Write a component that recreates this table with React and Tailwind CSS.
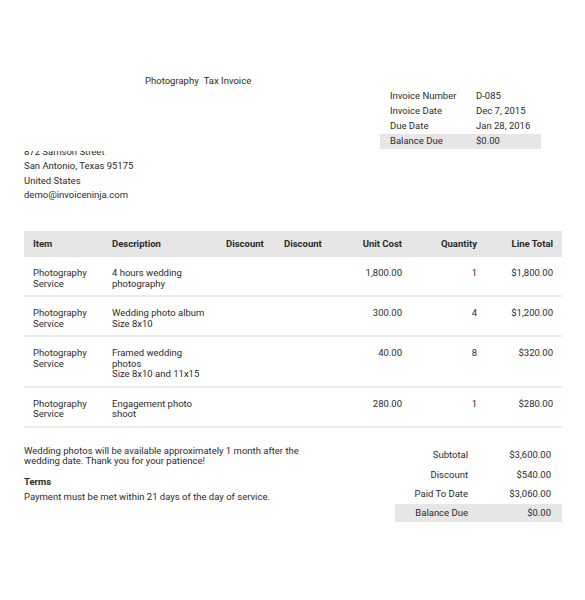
import React from 'react';

const details = [
    ['Invoice Number', 'D-085'],
    ['Invoice Date', 'Dec 7, 2015'],
    ['Due Date', 'Jan 28, 2016'],
];

const items = [
    { item: ['Photography', 'Service'], desc: ['4 hours wedding', 'photography'], cost: '1,800.00', qty: '1', total: '$1,800.00' },
    { item: ['Photography', 'Service'], desc: ['Wedding photo album', 'Size 8x10'], cost: '300.00', qty: '4', total: '$1,200.00' },
    { item: ['Photography', 'Service'], desc: ['Framed wedding', 'photos', 'Size 8x10 and 11x15'], cost: '40.00', qty: '8', total: '$320.00' },
    { item: ['Photography', 'Service'], desc: ['Engagement photo', 'shoot'], cost: '280.00', qty: '1', total: '$280.00' },
];

const totals = [
    ['Subtotal', '$3,600.00'],
    ['Discount', '$540.00'],
    ['Paid To Date', '$3,060.00'],
];

const cols = 'grid grid-cols-[79px_114px_58px_58px_78px_75px_76px]';

const App = () => {
    return (
        <div className="w-[585px] h-[600px] bg-white font-['Roboto',sans-serif] text-[9.5px] text-[#2b2b2b] pl-[24px] pr-[23px] pt-[75px]">
            {/* header */}
            <div className="flex items-start">
                <div className="ml-[121px] leading-[11px] flex gap-[5px]">
                    <span>Photography</span>
                    <span>Tax Invoice</span>
                </div>
                <div className="ml-auto mr-[21px] mt-[14px] w-[161px]">
                    {details.map(([k, v]) => (
                        <div key={k} className="h-[15px] flex items-center pl-[10px]">
                            <span className="w-[86px]">{k}</span>
                            <span>{v}</span>
                        </div>
                    ))}
                    <div className="h-[15px] flex items-center pl-[10px] bg-[#e6e6e6]">
                        <span className="w-[86px]">Balance Due</span>
                        <span>$0.00</span>
                    </div>
                </div>
            </div>

            {/* address, top line clipped as in the print preview */}
            <div className="mt-[2px] overflow-hidden">
                <div className="-mt-[6px] leading-[14.3px]">
                    <div>872 Samson Street</div>
                    <div>San Antonio, Texas 95175</div>
                    <div>United States</div>
                    <div>demo@invoiceninja.com</div>
                </div>
            </div>

            {/* items */}
            <div className="mt-[29px]">
                <div className={`${cols} h-[26px] items-center bg-[#e6e6e6] font-bold`}>
                    <div className="pl-[9px]">Item</div>
                    <div className="pl-[9px]">Description</div>
                    <div className="pl-[9px]">Discount</div>
                    <div className="pl-[9px]">Discount</div>
                    <div className="text-right pr-[9px]">Unit Cost</div>
                    <div className="text-right pr-[9px]">Quantity</div>
                    <div className="text-right pr-[9px]">Line Total</div>
                </div>
                {items.map((r, i) => (
                    <div key={i} className={`${cols} pt-[11px] pb-[6px] leading-[10.5px] border-b-2 border-[#ececec]`}>
                        <div className="pl-[9px]">{r.item.map(t => <div key={t}>{t}</div>)}</div>
                        <div className="pl-[9px]">{r.desc.map(t => <div key={t}>{t}</div>)}</div>
                        <div></div>
                        <div></div>
                        <div className="text-right pr-[9px]">{r.cost}</div>
                        <div className="text-right pr-[9px]">{r.qty}</div>
                        <div className="text-right pr-[9px]">{r.total}</div>
                    </div>
                ))}
            </div>

            {/* footer */}
            <div className="flex items-start mt-[17px]">
                <div className="w-[290px] leading-[10.5px] pt-[1px]">
                    <p>Wedding photos will be available approximately 1 month after the wedding date. Thank you for your patience!</p>
                    <p className="font-bold mt-[10px]">Terms</p>
                    <p className="mt-[5px]">Payment must be met within 21 days of the day of service.</p>
                </div>
                <div className="ml-auto w-[167px] pt-[1px]">
                    {totals.map(([k, v]) => (
                        <div key={k} className="h-[19.5px] flex items-center">
                            <span className="w-[73px] text-right">{k}</span>
                            <span className="w-[83px] text-right">{v}</span>
                        </div>
                    ))}
                    <div className="h-[18px] flex items-center bg-[#e6e6e6]">
                        <span className="w-[73px] text-right">Balance Due</span>
                        <span className="w-[83px] text-right">$0.00</span>
                    </div>
                </div>
            </div>
        </div>
    );
};

export default App;
